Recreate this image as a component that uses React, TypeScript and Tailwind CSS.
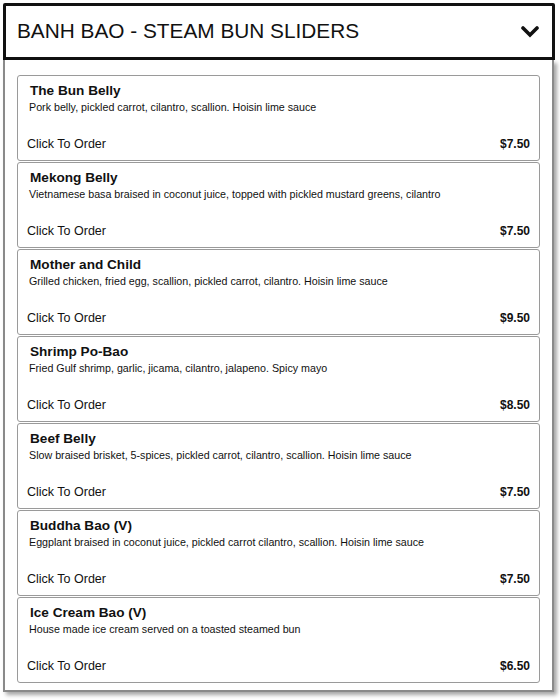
const items = [
  { name: "The Bun Belly", desc: "Pork belly, pickled carrot, cilantro, scallion. Hoisin lime sauce", price: "$7.50" },
  { name: "Mekong Belly", desc: "Vietnamese basa braised in coconut juice, topped with pickled mustard greens, cilantro", price: "$7.50" },
  { name: "Mother and Child", desc: "Grilled chicken, fried egg, scallion, pickled carrot, cilantro. Hoisin lime sauce", price: "$9.50" },
  { name: "Shrimp Po-Bao", desc: "Fried Gulf shrimp, garlic, jicama, cilantro, jalapeno. Spicy mayo", price: "$8.50" },
  { name: "Beef Belly", desc: "Slow braised brisket, 5-spices, pickled carrot, cilantro, scallion. Hoisin lime sauce", price: "$7.50" },
  { name: "Buddha Bao (V)", desc: "Eggplant braised in coconut juice, pickled carrot cilantro, scallion. Hoisin lime sauce", price: "$7.50" },
  { name: "Ice Cream Bao (V)", desc: "House made ice cream served on a toasted steamed bun", price: "$6.50" },
]

function MenuCard({ name, desc, price }: { name: string; desc: string; price: string }) {
  return (
    <div className="h-[86px] rounded-[3px] border border-[#9a9a9a] bg-white flex flex-col px-[9px] pt-[6px] pb-[8px]">
      <div className="pl-[3px] text-[13.6px] font-bold leading-[18px] text-[#111]">{name}</div>
      <div className="pl-[2px] text-[10.7px] leading-[14px] text-[#111]">{desc}</div>
      <div className="mt-auto flex items-end justify-between">
        <span className="text-[12.5px] leading-[16px] text-[#111]">Click To Order</span>
        <span className="text-[12px] font-bold leading-[16px] text-[#111]">{price}</span>
      </div>
    </div>
  )
}

export default function App() {
  return (
    <div className="w-[560px] h-[700px] bg-white p-[3px] font-['Liberation_Sans',Arial,sans-serif]">
      {/* Accordion header */}
      <div className="w-[552px] h-[57px] border-[3px] border-[#111] rounded-t-[2px] bg-white flex items-center justify-between pl-[11px] pr-[13px]">
        <span className="text-[20.8px] leading-none text-[#111]">BANH BAO - STEAM BUN SLIDERS</span>
        <svg width="18" height="12" viewBox="0 0 18 12" className="mt-[1px]">
          <polyline points="2,2 9,9 16,2" fill="none" stroke="#111" strokeWidth="3.6" strokeLinecap="round" strokeLinejoin="miter" />
        </svg>
      </div>

      {/* Panel */}
      <div className="w-[551px] border-x-2 border-b-2 border-[#8a8a8a] bg-white px-[12px] pt-[15px] pb-[7px] flex flex-col gap-px shadow-[3px_3px_4px_rgba(0,0,0,0.35)]">
        {items.map((it) => (
          <MenuCard key={it.name} {...it} />
        ))}
      </div>
    </div>
  )
}
